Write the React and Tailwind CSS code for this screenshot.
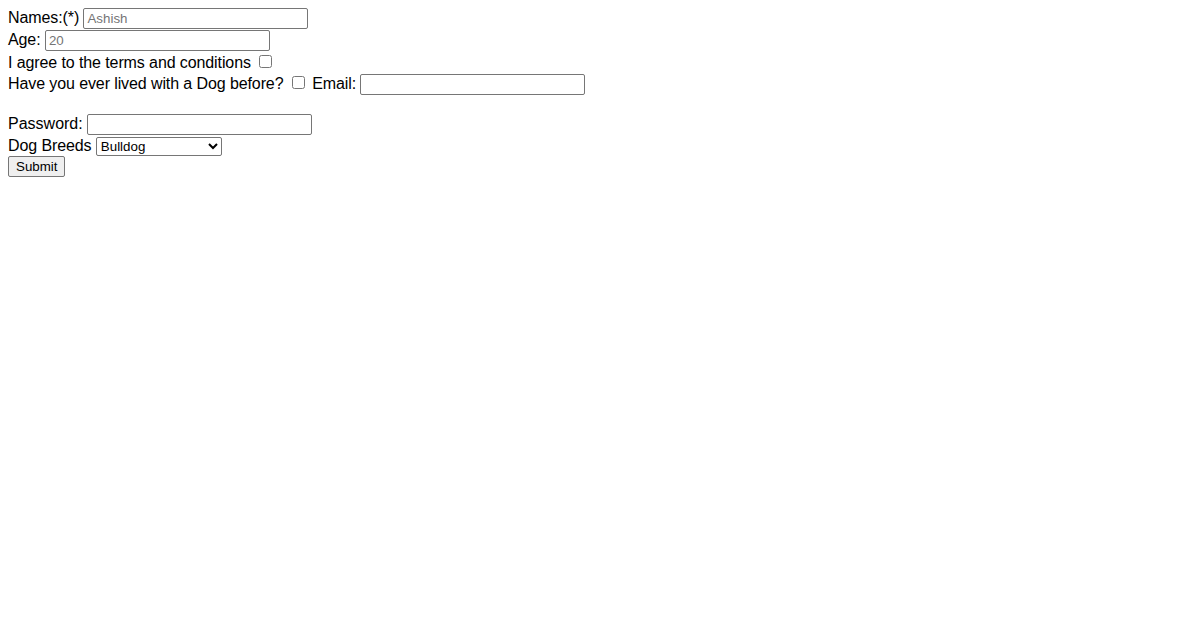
import { useState } from "react";

const inputCls =
  "w-[225px] h-[21px] px-[3px] py-px border border-[#767676] rounded-[2px] bg-white text-[13.33px] tracking-normal text-black placeholder:text-[#757575] outline-none";

const boxCls = "w-[13px] h-[13px] my-[3px] ml-[4px] mr-[3px]";

export default function App() {
  const [breed, setBreed] = useState("Bulldog");

  return (
    <div className="p-2 bg-white min-h-[630px] font-['Liberation_Sans',Arial,sans-serif] text-[16px] leading-[normal] tracking-[-0.1px] text-black">
      <form onSubmit={(e) => e.preventDefault()}>
        <div className="h-[22px] whitespace-nowrap">
          <label>Names:(*) </label>
          <input type="text" placeholder="Ashish" className={inputCls} />
        </div>
        <div className="h-[22px] whitespace-nowrap">
          <label>Age: </label>
          <input type="text" placeholder="20" className={inputCls} />
        </div>
        <div className="h-[21px] whitespace-nowrap">
          <label>I agree to the terms and conditions </label>
          <input type="checkbox" className={boxCls} />
        </div>
        <div className="h-[22px] whitespace-nowrap">
          <label>Have you ever lived with a Dog before? </label>
          <input type="checkbox" className={boxCls} />
          <label> Email: </label>
          <input type="email" className={inputCls} />
        </div>
        {/* empty line */}
        <div className="h-[19px]" />
        <div className="h-[22px] whitespace-nowrap">
          <label className="tracking-normal">Password: </label>
          <input type="password" className={inputCls} />
        </div>
        <div className="h-[20px] pt-px whitespace-nowrap">
          <label>Dog Breeds </label>
          <select
            value={breed}
            onChange={(e) => setBreed(e.target.value)}
            className="w-[126px] h-[19px] border border-[#767676] rounded-[2px] bg-white text-[13.33px] tracking-normal text-black"
          >
            <option>Bulldog</option>
            <option>Labrador</option>
            <option>Beagle</option>
            <option>Poodle</option>
          </select>
        </div>
        <div className="h-[22px]">
          <button
            type="submit"
            className="px-[7px] py-px h-[21px] border border-[#767676] rounded-[2px] bg-[#efefef] text-[13.33px] tracking-normal text-black"
          >
            Submit
          </button>
        </div>
      </form>
    </div>
  );
}
